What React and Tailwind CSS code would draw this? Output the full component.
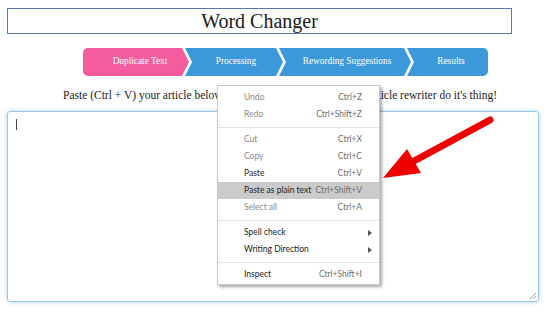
import React from "react";

const steps = [
  { label: "Duplicate Text", color: "bg-[#f55c9e]", width: "w-[106px]", first: true },
  { label: "Processing", color: "bg-[#3b99d9]", width: "w-[98px]" },
  { label: "Rewording Suggestions", color: "bg-[#3b99d9]", width: "w-[132px]" },
  { label: "Results", color: "bg-[#3b99d9]", width: "w-[81px]", last: true },
];

const menu = [
  { label: "Undo", key: "Ctrl+Z", disabled: true },
  { label: "Redo", key: "Ctrl+Shift+Z", disabled: true },
  { sep: true },
  { label: "Cut", key: "Ctrl+X", disabled: true },
  { label: "Copy", key: "Ctrl+C", disabled: true },
  { label: "Paste", key: "Ctrl+V" },
  { label: "Paste as plain text", key: "Ctrl+Shift+V", active: true },
  { label: "Select all", key: "Ctrl+A", disabled: true },
  { sep: true },
  { label: "Spell check", sub: true },
  { label: "Writing Direction", sub: true },
  { sep: true },
  { label: "Inspect", key: "Ctrl+Shift+I" },
];

function Step({ step, index }) {
  const shape = step.first
    ? "[clip-path:polygon(0_0,calc(100%-7px)_0,100%_50%,calc(100%-7px)_100%,0_100%)] rounded-l-[5px] pl-[8px]"
    : step.last
    ? "[clip-path:polygon(0_0,100%_0,100%_100%,0_100%,7px_50%)] rounded-r-[5px] pl-[7px]"
    : "[clip-path:polygon(0_0,calc(100%-7px)_0,100%_50%,calc(100%-7px)_100%,0_100%,7px_50%)] pl-[4px]";
  return (
    <div
      className={`${step.color} ${step.width} ${shape} ${index > 0 ? "-ml-[4px]" : ""} h-full flex items-center justify-center text-white text-[9.3px] font-['Liberation_Serif',serif] whitespace-nowrap`}
    >
      {step.label}
    </div>
  );
}

function ContextMenu() {
  return (
    <div className="absolute left-[217px] top-[85px] w-[163px] bg-white border border-[#c9c9c9] shadow-[2px_2px_3px_rgba(0,0,0,0.35)] pt-[3px] pb-[1px] text-[8.5px] font-['Lato',sans-serif] whitespace-nowrap">
      {menu.map((m, i) =>
        m.sep ? (
          <div key={i} className="h-[8px] flex items-center">
            <div className="w-full h-px bg-[#e3e3e3]" />
          </div>
        ) : (
          <div
            key={i}
            className={`h-[17px] flex items-center justify-between pl-[26px] pr-[17px] ${m.active ? "bg-[#cbcbcb]" : ""}`}
          >
            <span className={m.disabled ? "text-[#8a8a8a]" : "text-[#222]"}>{m.label}</span>
            {m.key && <span className="text-[#6e6e6e]">{m.key}</span>}
            {m.sub && (
              <span className="w-0 h-0 border-y-[3px] border-y-transparent border-l-[4px] border-l-[#555] -mr-[10px]" />
            )}
          </div>
        )
      )}
    </div>
  );
}

export default function App() {
  return (
    <div className="relative w-[550px] h-[312px] overflow-hidden bg-white font-['Liberation_Serif',serif]">
      <div className="pt-[8px] px-[7px]">
        <div className="w-[505px] h-[26px] border border-[#557aa6] flex items-center justify-center text-[20px] text-[#1a1a1a] leading-none font-['Liberation_Serif',serif]">
          Word Changer
        </div>

        <div className="mt-[14px] ml-[76px] h-[28px] flex">
          {steps.map((s, i) => (
            <Step key={s.label} step={s} index={i} />
          ))}
        </div>

        <p className="mt-[11px] h-[16px] leading-[16px] text-[11.5px] text-[#1a1a1a] pl-[56px] whitespace-nowrap font-['Liberation_Serif',serif]">
          Paste (Ctrl + V) your article below and quickly let this free online article rewriter do it's thing!
        </p>

        <div className="relative mt-[8px] w-[532px] h-[191px] rounded-[3px] border border-[#9cc8e8] shadow-[0_0_4px_rgba(102,175,233,0.55)]">
          <div className="absolute left-[8px] top-[7px] w-px h-[11px] bg-[#444]" />
          <svg className="absolute right-[1px] bottom-[1px]" width="8" height="8" viewBox="0 0 8 8">
            <path d="M7 1 L1 7 M7 4 L4 7" stroke="#888" strokeWidth="0.8" />
          </svg>
        </div>
      </div>

      <ContextMenu />

      <svg className="absolute left-0 top-0 pointer-events-none" width="550" height="312" viewBox="0 0 550 312">
        <line x1="490" y1="120" x2="414" y2="161" stroke="#f00000" strokeWidth="7" strokeLinecap="round" />
        <polygon points="383,178 407,149 421,173" fill="#f00000" />
      </svg>
    </div>
  );
}
